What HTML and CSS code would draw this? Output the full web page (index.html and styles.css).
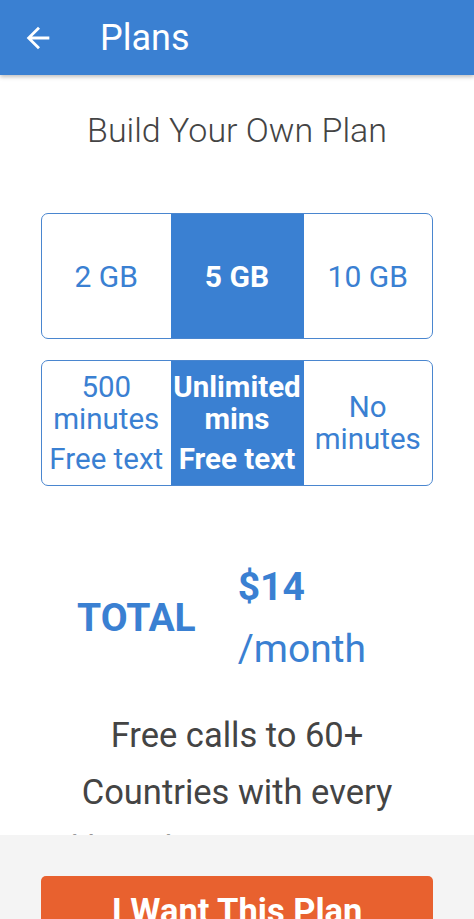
FILE: index.html
```html
<!DOCTYPE html>
<html>
<head>
<meta charset="utf-8">
<link rel="stylesheet" href="styles.css">
</head>
<body>
<div class="app">
  <header class="topbar">
    <svg class="back" viewBox="0 0 24 24"><path d="M20 11H7.83l5.59-5.59L12 4l-8 8 8 8 1.41-1.41L7.83 13H20v-2z" fill="#fff"/></svg>
    <span class="title">Plans</span>
  </header>
  <main class="content">
    <h1 class="heading">Build Your Own Plan</h1>
    <div class="seg seg-data">
      <div class="opt">2 GB</div>
      <div class="opt sel">5 GB</div>
      <div class="opt">10 GB</div>
    </div>
    <div class="seg seg-min">
      <div class="opt"><div class="lines">500<br>minutes</div><div class="extra">Free text</div></div>
      <div class="opt sel"><div class="lines">Unlimited<br>mins</div><div class="extra">Free text</div></div>
      <div class="opt"><div class="lines">No<br>minutes</div></div>
    </div>
    <div class="total">
      <div class="total-label">TOTAL</div>
      <div class="price">
        <div class="amount">$14</div>
        <div class="per">/month</div>
      </div>
    </div>
    <p class="desc">Free calls to 60+ Countries with every libre plan you activate</p>
  </main>
  <footer class="bottom">
    <button class="cta">I Want This Plan</button>
  </footer>
</div>
</body>
</html>
```
FILE: styles.css
```css
* { box-sizing: border-box; }
html, body { margin: 0; padding: 0; }
body { font-family: Roboto, "Noto Sans", sans-serif; background: #fff; }
.app { width: 474px; height: 919px; display: flex; flex-direction: column; overflow: hidden; }
.topbar {
  height: 75px; flex: none; background: #3a80d2; display: flex; align-items: center;
  padding-left: 21px; box-shadow: 0 2px 4px rgba(0,0,0,0.25); position: relative; z-index: 2;
}
.back { width: 34px; height: 34px; flex: none; }
.title { color: #fff; font-size: 36px; margin-left: 45px; }
.content { flex: 1; overflow: hidden; display: flex; flex-direction: column; align-items: center; }
.content > * { flex: none; }
.heading { font-weight: 300; font-size: 34px; color: #444; margin: 35px 0 0; line-height: 40px; }
.seg {
  width: 392px; display: flex; border: 1.5px solid #4a86cf; border-radius: 7px; overflow: hidden;
  color: #3a80d2;
}
.seg-data { height: 126px; margin-top: 63px; }
.seg-min { height: 126px; margin-top: 21px; }
.opt { flex: 1; display: flex; flex-direction: column; align-items: center; justify-content: center; text-align: center; }
.opt:nth-child(2) { flex: 0 0 133px; }
.seg-data .opt { font-size: 30px; }
.seg-min .opt { font-size: 29.5px; }
.lines { line-height: 32px; }
.extra { line-height: 32px; margin-top: 8px; }
.sel { background: #3a80d2; color: #fff; font-weight: 700; }
.total { width: 100%; display: flex; align-items: center; padding-left: 77px; margin-top: 70px; color: #3a80d2; }
.total-label { font-size: 39px; font-weight: 700; }
.price { margin-left: 42px; }
.amount { font-size: 39px; font-weight: 700; line-height: 62px; }
.per { font-size: 39px; line-height: 62px; }
.desc { font-size: 34.5px; color: #444; text-align: center; line-height: 57px; margin: 27px 0 0; width: 360px; }
.bottom { height: 84px; flex: none; background: #f4f4f4; padding: 41px 41px 0; }
.cta {
  width: 392px; height: 60px; border: none; border-radius: 5px; background: #e8612f; color: #fff;
  font-family: Roboto, sans-serif; font-weight: 700; font-size: 34.5px; display: block; padding: 0; line-height: 70px;
  text-align: center;
}
```
